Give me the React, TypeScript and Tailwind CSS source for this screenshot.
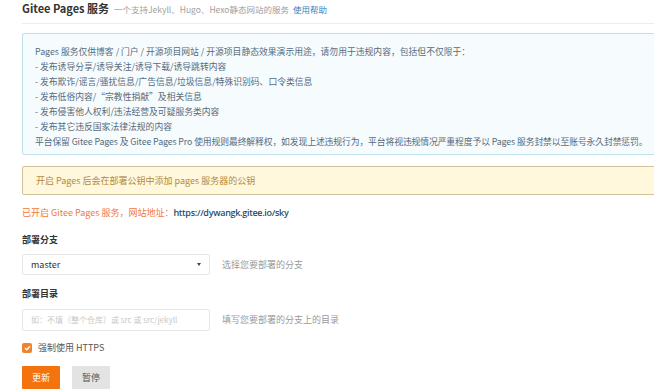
import React from 'react';

const FONT = '"Noto Sans CJK SC", "Liberation Sans", sans-serif';

const RULES = [
  'Pages 服务仅供博客 / 门户 / 开源项目网站 / 开源项目静态效果演示用途，请勿用于违规内容，包括但不仅限于：',
  '- 发布诱导分享/诱导关注/诱导下载/诱导跳转内容',
  '- 发布欺诈/谣言/骚扰信息/广告信息/垃圾信息/特殊识别码、口令类信息',
  '- 发布低俗内容/“宗教性捐献”及相关信息',
  '- 发布侵害他人权利/违法经营及可疑服务类内容',
  '- 发布其它违反国家法律法规的内容',
];

const FOOTNOTE =
  '平台保留 Gitee Pages 及 Gitee Pages Pro 使用规则最终解释权，如发现上述违规行为，平台将视违规情况严重程度予以 Pages 服务封禁以至账号永久封禁惩罚。';

export default function App() {
  return (
    <div
      className="w-[654px] h-[392px] overflow-hidden bg-white pl-[22px] pt-[2px]"
      style={{ fontFamily: FONT }}
    >
      <div className="flex items-baseline gap-[5px] h-[13px] leading-[13px] whitespace-nowrap">
        <span className="text-[11px] font-bold text-[#333]">Gitee Pages 服务</span>
        <span className="text-[8.5px] text-[#a0a0a0]">一个支持Jekyll、Hugo、Hexo静态网站的服务</span>
        <span className="text-[8.5px] text-[#3a7fb5] -ml-[1px]">使用帮助</span>
      </div>

      <div className="mt-[8px] w-[700px] border-t border-[#ececec]" />

      <div className="mt-[9px] w-[660px] rounded-[2px] border border-[#bfe0e8] bg-[#f6fcfe] pl-[12px] pt-[10px] pb-[5px] text-[8.8px] leading-[15px] text-[#566a7c] whitespace-nowrap">
        {RULES.map((line) => (
          <div key={line}>{line}</div>
        ))}
        <div className="tracking-[-0.1px]">{FOOTNOTE}</div>
      </div>

      <div className="mt-[11px] w-[660px] h-[29px] rounded-[2px] border border-[#cfc39c] bg-[#fff8dc] pl-[13px] flex items-center text-[9px] text-[#b48a3c]">
        开启 Pages 后会在部署公钥中添加 pages 服务器的公钥
      </div>

      <div className="mt-[12px] h-[12px] leading-[12px] text-[9px] whitespace-nowrap flex items-baseline">
        <span className="text-[#f0783c]">已开启 Gitee Pages 服务，网站地址：</span>
        <span
          className="text-[#1f4f6c] text-[9px] font-semibold tracking-[-0.3px]"
          style={{ fontFamily: '"Open Sans", sans-serif' }}
        >
          https://dywangk.gitee.io/sky
        </span>
      </div>

      <div className="mt-[15px] text-[9px] leading-[12px] font-bold text-[#333]">部署分支</div>
      <div className="mt-[8px] flex items-center gap-[12px]">
        <div className="w-[188px] h-[21px] rounded-[2px] border border-[#e6e6e6] bg-white flex items-center justify-between pl-[8px] pr-[8px] text-[9px] text-[#333]">
          <span>master</span>
          <span className="w-0 h-0 border-l-[2.5px] border-r-[2.5px] border-t-[3px] border-l-transparent border-r-transparent border-t-[#444]" />
        </div>
        <span className="text-[9px] text-[#999]">选择您要部署的分支</span>
      </div>

      <div className="mt-[13px] text-[9px] leading-[12px] font-bold text-[#333]">部署目录</div>
      <div className="mt-[9px] flex items-center gap-[12px]">
        <div className="w-[188px] h-[22px] rounded-[2px] border border-[#e6e6e6] bg-white flex items-center pl-[8px] text-[8px] text-[#c8c8c8] whitespace-nowrap">
          如：不填（整个仓库）或 src 或 src/jekyll
        </div>
        <span className="text-[9px] text-[#999]">填写您要部署的分支上的目录</span>
      </div>

      <div className="mt-[11px] flex items-center gap-[6px]">
        <span className="w-[10px] h-[10px] rounded-[2px] bg-[#f0832c] flex items-center justify-center">
          <svg width="7" height="6" viewBox="0 0 7 6">
            <path d="M1 3 L2.8 4.7 L6 1.2" fill="none" stroke="white" strokeWidth="1.4" />
          </svg>
        </span>
        <span className="text-[9px] leading-[12px] text-[#555]">强制使用 HTTPS</span>
      </div>

      <div className="mt-[12px] flex gap-[12px]">
        <button className="w-[38px] h-[23px] bg-[#f3740f] text-white text-[9px] rounded-[1px]">更新</button>
        <button className="w-[38px] h-[23px] bg-[#e3e3e3] text-[#555] text-[9px] rounded-[1px]">暂停</button>
      </div>
    </div>
  );
}
